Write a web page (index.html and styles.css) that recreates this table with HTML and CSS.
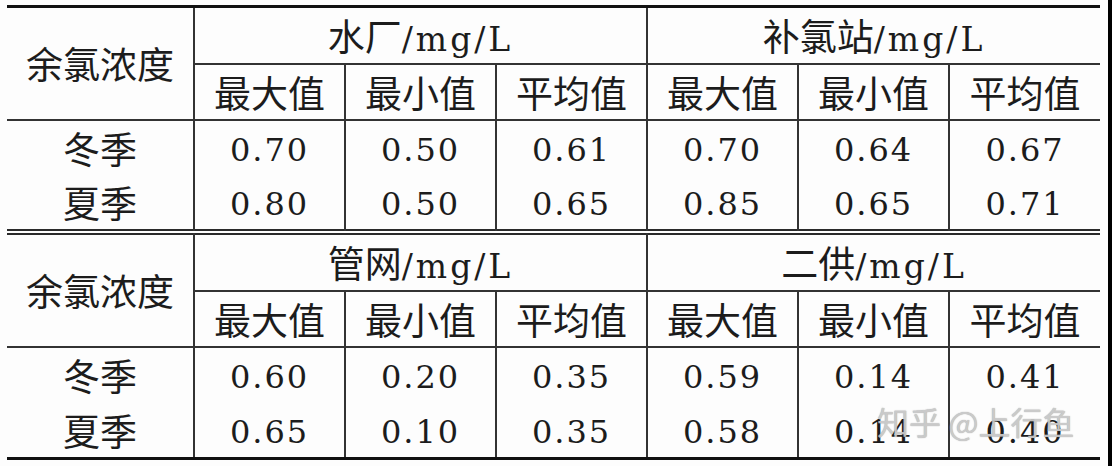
FILE: index.html
```html
<!DOCTYPE html>
<html lang="zh-CN">
<head>
    <meta charset="UTF-8">
    <meta name="viewport" content="width=device-width, initial-scale=1.0">
    <title>余氯浓度</title>
    <link rel="stylesheet" href="styles.css">
</head>
<body>
    <div class="page">
        <div class="sheet">
            <!-- 水厂 / 补氯站 -->
            <table class="stats stats-upper">
                <colgroup>
                    <col class="c-label">
                    <col span="6" class="c-val">
                </colgroup>
                <tr class="r-group">
                    <th rowspan="2" class="label zh">余氯浓度</th>
                    <th colspan="3" class="group"><span class="zh">水厂</span><span class="unit">/mg/L</span></th>
                    <th colspan="3" class="group"><span class="zh">补氯站</span><span class="unit">/mg/L</span></th>
                </tr>
                <tr class="r-sub">
                    <th class="zh">最大值</th>
                    <th class="zh">最小值</th>
                    <th class="zh">平均值</th>
                    <th class="zh">最大值</th>
                    <th class="zh">最小值</th>
                    <th class="zh">平均值</th>
                </tr>
                <tr class="r-data">
                    <th class="label zh">冬季</th>
                    <td>0.70</td><td>0.50</td><td>0.61</td>
                    <td>0.70</td><td>0.64</td><td>0.67</td>
                </tr>
                <tr class="r-data">
                    <th class="label zh">夏季</th>
                    <td>0.80</td><td>0.50</td><td>0.65</td>
                    <td>0.85</td><td>0.65</td><td>0.71</td>
                </tr>
            </table>

            <!-- 管网 / 二供 -->
            <table class="stats stats-lower">
                <colgroup>
                    <col class="c-label">
                    <col span="6" class="c-val">
                </colgroup>
                <tr class="r-group">
                    <th rowspan="2" class="label zh">余氯浓度</th>
                    <th colspan="3" class="group"><span class="zh">管网</span><span class="unit">/mg/L</span></th>
                    <th colspan="3" class="group"><span class="zh">二供</span><span class="unit">/mg/L</span></th>
                </tr>
                <tr class="r-sub">
                    <th class="zh">最大值</th>
                    <th class="zh">最小值</th>
                    <th class="zh">平均值</th>
                    <th class="zh">最大值</th>
                    <th class="zh">最小值</th>
                    <th class="zh">平均值</th>
                </tr>
                <tr class="r-data r-data-lower">
                    <th class="label zh">冬季</th>
                    <td>0.60</td><td>0.20</td><td>0.35</td>
                    <td>0.59</td><td>0.14</td><td>0.41</td>
                </tr>
                <tr class="r-data r-data-lower">
                    <th class="label zh">夏季</th>
                    <td>0.65</td><td>0.10</td><td>0.35</td>
                    <td>0.58</td><td>0.14</td><td>0.40</td>
                </tr>
            </table>
        </div>

        <div class="watermark">知乎 @上行鱼</div>
    </div>
</body>
</html>
```

FILE: styles.css
```css
* {
    margin: 0;
    padding: 0;
    box-sizing: border-box;
}

body {
    background: #fdfdfd;
    color: #1c1c1c;
    font-family: "DejaVu Serif", "Noto Sans CJK SC", serif;
}

.page {
    position: relative;
    width: 1112px;
    height: 466px;
    border-right: 4px solid #000; /* dark edge of the scan */
    overflow: hidden;
}

.sheet {
    padding: 5px 0 0 7px;
}

.stats {
    width: 1093px;
    table-layout: fixed;
    border-collapse: collapse;
}

.stats-upper {
    border-top: 3px solid #111;
    border-bottom: 2px solid #2a2a2a;
}

.stats-lower {
    margin-top: 2px;
    border-top: 2px solid #2a2a2a;
    border-bottom: 3px solid #111;
}

.c-label { width: 187px; }
.c-val { width: 151px; }

th, td {
    font-weight: normal;
    text-align: center;
    vertical-align: middle;
    border-right: 2px solid #333;
    font-size: 32px;
    letter-spacing: 2px;
    white-space: nowrap;
}

th:last-child, td:last-child {
    border-right: 0;
}

.zh {
    font-family: "Noto Sans CJK SC", sans-serif;
    font-size: 37px;
    letter-spacing: 0;
}

.unit {
    font-size: 33px;
    letter-spacing: 3px;
}

.r-group { height: 57px; }
.r-sub { height: 56px; }
.r-data { height: 55px; }
.r-data-lower { height: 56px; }

.r-group .group,
.r-group .label,
.r-sub th {
    border-bottom: 2px solid #333;
}

.r-data td {
    padding-top: 4px;
}

.watermark {
    position: absolute;
    left: 877px;
    top: 398px;
    font-family: "Noto Sans CJK SC", sans-serif;
    font-size: 32px;
    color: rgba(210, 210, 210, 0.85);
    text-shadow: 0 0 1px rgba(110, 110, 110, 0.7);
    white-space: nowrap;
}
```
